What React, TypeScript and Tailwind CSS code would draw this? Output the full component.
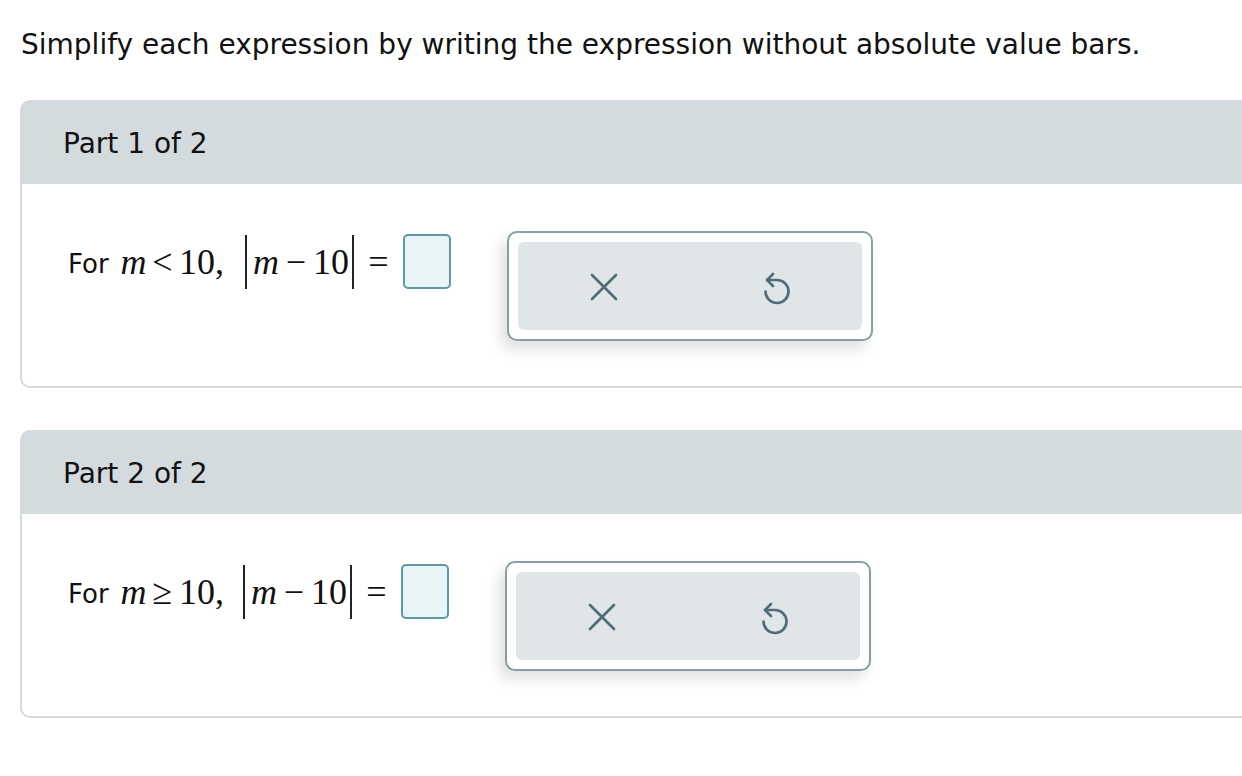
import React from 'react';

const sans = { fontFamily: '"DejaVu Sans", Verdana, sans-serif' };

function UndoIcon() {
  return (
    <svg width="32" height="40" viewBox="0 0 32 40" fill="none" stroke="currentColor" strokeWidth="2.7" strokeLinecap="round" strokeLinejoin="round">
      <path d="M7 13 H17 A11.5 11.5 0 1 1 5.5 24.5" />
      <path d="M13 7 L7 13 L13 19" />
    </svg>
  );
}

function XIcon() {
  return (
    <svg width="28" height="28" viewBox="0 0 28 28" fill="none" stroke="currentColor" strokeWidth="2.7" strokeLinecap="round">
      <path d="M2 2 L26 26 M26 2 L2 26" />
    </svg>
  );
}

function Bar() {
  return <span className="block w-[2px] h-[54px] bg-[#222]" />;
}

function MathRow({ rel, narrow }: { rel: string; narrow?: boolean }) {
  return (
    <div className="flex items-center h-[55px] text-[#111]">
      <span className="w-[51px] text-[26px] leading-none pt-[4px]" style={sans}>For</span>
      <div className="flex items-center text-[36px] leading-none font-['Liberation_Serif',serif]">
        <i className="w-[29px] text-center">m</i>
        <span className="ml-[2px] w-[25px] text-center">{rel}</span>
        <span className={narrow ? 'ml-[4px] w-[50px]' : 'ml-[4px] w-[52px]'}>10,</span>
        <span className="ml-[14px]"><Bar /></span>
        <i className="ml-[4px] w-[30px] text-center">m</i>
        <span className="ml-[3px] w-[24px] text-center">−</span>
        <span className="ml-[5px] w-[34px] text-center">10</span>
        <span className="ml-[5px]"><Bar /></span>
        <span className="ml-[12px] w-[25px] text-center">=</span>
      </div>
      <span className="ml-[12px] w-[48px] h-[55px] rounded-[5px] border-2 border-[#5e9aa6] bg-[#e8f4f6]" />
    </div>
  );
}

function Part({ n, rel, narrow }: { n: number; rel: string; narrow?: boolean }) {
  return (
    <div className="ml-5">
      <div className="h-[84px] bg-[#d3dbdf] rounded-tl-[10px] flex items-center pl-[43px] pt-[3px] text-[28px] text-[#111]" style={sans}>
        Part {n} of 2
      </div>
      <div className="h-[204px] border-l-2 border-b-2 border-[#d3dbdf] rounded-bl-[10px] bg-white flex items-start pt-[47px] pl-[46px]">
        <div className="mt-[3px]">
          <MathRow rel={rel} narrow={narrow} />
        </div>
        <div className="ml-[56px] w-[366px] h-[110px] rounded-[10px] border-2 border-[#8a9da5] bg-white shadow-[-6px_8px_14px_rgba(0,0,0,0.12)] p-[9px]">
          <div className="h-full rounded-[6px] bg-[#e0e5e8] flex items-center text-[#4f6d78]">
            <div className="flex-1 flex justify-center pt-[2px]"><XIcon /></div>
            <div className="flex-1 flex justify-center pt-[2px]"><UndoIcon /></div>
          </div>
        </div>
      </div>
    </div>
  );
}

export default function App() {
  return (
    <div className="w-[1242px] h-[776px] bg-white overflow-hidden" style={sans}>
      <div className="pt-[29px] pl-[21px] text-[28px] leading-[32px] text-[#111]">
        Simplify each expression by writing the expression without absolute value bars.
      </div>
      <div className="mt-[39px]">
        <Part n={1} rel="<" />
      </div>
      <div className="mt-[42px]">
        <Part n={2} rel="≥" narrow />
      </div>
    </div>
  );
}
